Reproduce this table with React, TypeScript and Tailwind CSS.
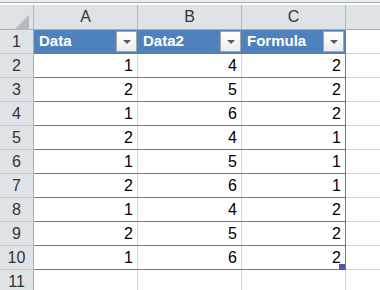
const rows = [
  [1, 4, 2],
  [2, 5, 2],
  [1, 6, 2],
  [2, 4, 1],
  [1, 5, 1],
  [2, 6, 1],
  [1, 4, 2],
  [2, 5, 2],
  [1, 6, 2],
];

function FilterButton() {
  return (
    <div className="absolute right-[1px] top-[1px] w-[21px] h-[21px] border border-[#a5a5a5] bg-gradient-to-b from-white to-[#ececec] flex items-center justify-center">
      <div className="w-0 h-0 border-l-[4px] border-r-[4px] border-t-[4px] border-l-transparent border-r-transparent border-t-[#5a5a5a]" />
    </div>
  );
}

function RowHead({ n }: { n: number }) {
  return (
    <div className="w-[34px] h-full shrink-0 bg-[#dfe2e6] border-r border-r-[#a9acb0] border-b border-b-[#c4c7cb] flex items-center justify-center text-[#333]">
      {n}
    </div>
  );
}

export default function App() {
  return (
    <div className="w-[380px] h-[290px] overflow-hidden bg-white text-[16px] text-black" style={{ fontFamily: '"Liberation Sans", Arial, sans-serif' }}>
      <div className="h-[2px] bg-[#eceef1]" />
      <div className="h-[1px] bg-[#a8abaf]" />
      <div className="h-[2px] bg-white" />

      {/* column headers */}
      <div className="flex h-[25px] bg-[#dfe2e6] border-b border-b-[#a9acb0] text-[#333]">
        <div className="w-[34px] shrink-0 border-r border-r-[#b3b6ba] relative">
          <div className="absolute left-[14px] top-[10px] w-0 h-0 border-l-[15px] border-b-[15px] border-l-transparent border-b-[#b6b9bd]" />
        </div>
        {["A", "B", "C"].map((c) => (
          <div key={c} className="w-[104px] shrink-0 border-r border-r-[#b3b6ba] flex items-center justify-center">
            {c}
          </div>
        ))}
        <div className="flex-1" />
      </div>

      {/* table header */}
      <div className="flex h-[24px]">
        <RowHead n={1} />
        <div className="flex bg-[#4f81bd] text-white text-[15px] font-bold border-b border-b-[#4f81bd] border-r border-r-[#4f81bd]">
          {["Data", "Data2", "Formula"].map((h, i) => (
            <div key={h} className={`relative shrink-0 h-full flex items-center pl-[5px] ${i < 2 ? "w-[104px]" : "w-[103px]"}`}>
              {h}
              <FilterButton />
            </div>
          ))}
        </div>
        <div className="flex-1 border-b border-b-[#d4d4d4]" />
      </div>

      {rows.map((r, i) => (
        <div key={i} className="flex h-[24px]">
          <RowHead n={i + 2} />
          <div className="flex border-b border-b-[#4f81bd] border-r border-r-[#4f81bd]">
            {r.map((v, j) => (
              <div
                key={j}
                className={`relative shrink-0 h-full flex items-center justify-end pr-[4px] ${j < 2 ? "w-[104px] border-r border-r-[#d4d4d4]" : "w-[103px]"}`}
              >
                {v}
                {i === rows.length - 1 && j === 2 && (
                  <div className="absolute right-0 bottom-[-1px] w-[6px] h-[6px] bg-[#4a56b8]" />
                )}
              </div>
            ))}
          </div>
          <div className="flex-1 border-b border-b-[#d4d4d4]" />
        </div>
      ))}

      <div className="flex h-[24px]">
        <RowHead n={11} />
        {[0, 1, 2].map((k) => (
          <div key={k} className="w-[104px] shrink-0 h-full border-r border-r-[#d4d4d4] border-b border-b-[#d4d4d4]" />
        ))}
        <div className="flex-1 border-b border-b-[#d4d4d4]" />
      </div>
    </div>
  );
}
